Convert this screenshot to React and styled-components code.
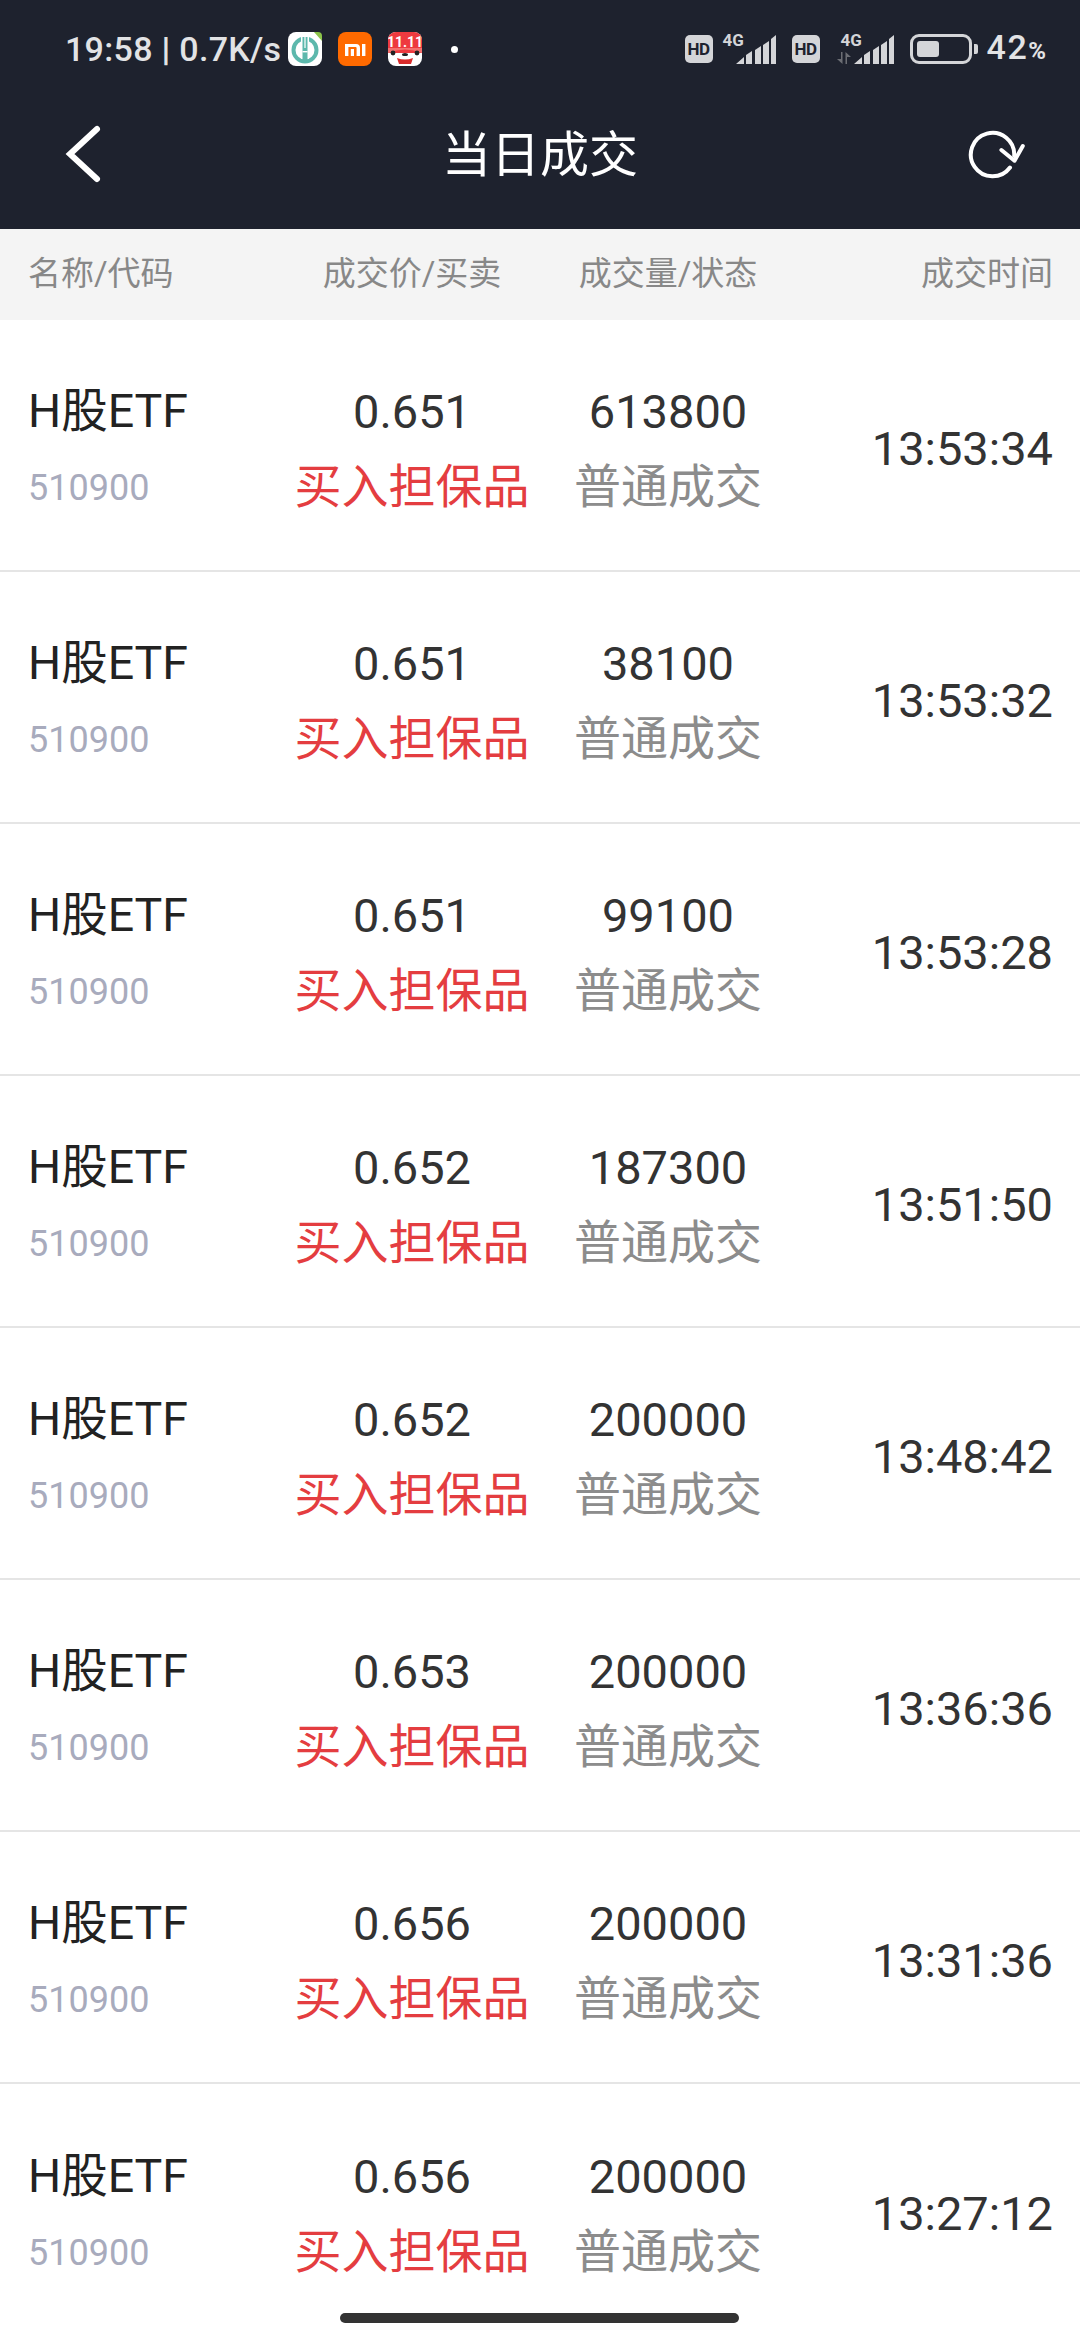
import React from 'react'
import styled, { createGlobalStyle } from 'styled-components'

const GlobalStyle = createGlobalStyle`
    html, body {
        margin: 0;
        padding: 0;
        background: #fff;
    }
    body {
        font-family: Roboto, "Noto Sans CJK SC", sans-serif;
    }
`

const trades = [
    { price: '0.651', volume: '613800', time: '13:53:34' },
    { price: '0.651', volume: '38100', time: '13:53:32' },
    { price: '0.651', volume: '99100', time: '13:53:28' },
    { price: '0.652', volume: '187300', time: '13:51:50' },
    { price: '0.652', volume: '200000', time: '13:48:42' },
    { price: '0.653', volume: '200000', time: '13:36:36' },
    { price: '0.656', volume: '200000', time: '13:31:36' },
    { price: '0.656', volume: '200000', time: '13:27:12' },
]

const BankIcon = () => (
    <svg width="34" height="34" viewBox="0 0 34 34">
        <rect width="34" height="34" rx="8" fill="#fff" />
        <path d="M26 0h4a4 4 0 0 1 4 4v5z" fill="#8bc34a" />
        <circle cx="17" cy="18" r="11.500" fill="none" stroke="#5cb8ac" strokeWidth="4" />
        <rect x="13" y="3" width="8" height="24" rx="1" fill="#fff" />
        <rect x="14.500" y="5" width="5" height="24" fill="#5cb8ac" />
        <rect x="16.400" y="5" width="1.200" height="11" fill="#fff" />
        <rect x="14.500" y="19" width="5" height="1.400" fill="#fff" />
    </svg>
)

const MiIcon = () => (
    <svg width="34" height="34" viewBox="0 0 34 34">
        <rect width="34" height="34" rx="8" fill="#ff6a00" />
        <path d="M7 12h11a4 4 0 0 1 4 4v8h-3.400v-8a1 1 0 0 0-1-1H10.400v9H7z" fill="#fff" />
        <rect x="12.800" y="17" width="3.200" height="7" fill="#fff" />
        <rect x="24" y="12" width="3.400" height="12" fill="#fff" />
    </svg>
)

const SaleIcon = () => (
    <svg width="34" height="34" viewBox="0 0 34 34">
        <defs>
            <clipPath id="saleClip">
                <rect width="34" height="34" rx="8" />
            </clipPath>
        </defs>
        <g clipPath="url(#saleClip)">
            <rect width="34" height="34" fill="#fff" />
            <rect width="34" height="21" fill="#ee3a3f" />
            <path d="M0 21q17-7 34 0v-5H0z" fill="#f4716f" />
            <text x="17" y="15" textAnchor="middle" fontSize="14" fontWeight="700" fontFamily="Roboto" fill="#fff">11.11</text>
            <ellipse cx="17" cy="25" rx="6" ry="3" fill="#fff" />
            <ellipse cx="17" cy="22.500" rx="3" ry="1.600" fill="#222" />
            <path d="M9 26q8 3 16 0l-2 6H11z" fill="#d92b2b" />
            <circle cx="5" cy="21" r="2.400" fill="#222" />
            <circle cx="29" cy="21" r="2.400" fill="#222" />
        </g>
    </svg>
)

const Signal = () => (
    <svg width="40" height="29" viewBox="0 0 40 29">
        <path d="M0 29l8-7v7zM10 29v-9l6-4v13zM19 29V15l6-4v18zM27 29V10l6-4v23zM35 29V4l5-4v29z" fill="#d4d5d8" />
    </svg>
)

const DataArrows = () => (
    <svg width="14" height="12" viewBox="0 0 14 12">
        <path d="M4 0h1.500v12L0 7h4zM8.500 0L14 5h-4v7H8.500z" fill="#6c6e74" />
    </svg>
)

const BackIcon = () => (
    <svg width="44" height="60" viewBox="0 0 44 60">
        <path d="M37 5L10 30l27 25" fill="none" stroke="#fff" strokeWidth="6" strokeLinecap="round" />
    </svg>
)

const RefreshIcon = () => (
    <svg width="60" height="56" viewBox="0 0 60 56">
        <path d="M42 41.500A21.700 21.700 0 1 1 46.200 30" fill="none" stroke="#fff" strokeWidth="4" strokeLinecap="round" />
        <path d="M33.400 24L46.500 34.700L54.800 20" fill="none" stroke="#fff" strokeWidth="4" strokeLinecap="round" strokeLinejoin="round" />
    </svg>
)

const App = () => {
    return (
        <Page>
            <GlobalStyle />
            <TopBar>
                <StatusBar>
                    <StatusLeft>
                        <Clock>19:58 <b>|</b> 0.7K/s</Clock>
                        <BankIcon />
                        <MiIcon />
                        <SaleIcon />
                        <NoticeDot />
                    </StatusLeft>
                    <StatusRight>
                        <HdBadge>HD</HdBadge>
                        <Cell>
                            <NetLabel>4G</NetLabel>
                            <Signal />
                        </Cell>
                        <HdBadge>HD</HdBadge>
                        <Cell wide>
                            <NetLabel wide>4G</NetLabel>
                            <DataArrowSlot><DataArrows /></DataArrowSlot>
                            <Signal />
                        </Cell>
                        <Battery>
                            <BatteryFill />
                        </Battery>
                        <BatteryNub />
                        <BatteryText>42<small>%</small></BatteryText>
                    </StatusRight>
                </StatusBar>
                <NavBar>
                    <BackIcon />
                    <Title>当日成交</Title>
                    <RefreshIcon />
                </NavBar>
            </TopBar>
            <TableHead>
                <HeadCell>名称/代码</HeadCell>
                <HeadCell center>成交价/买卖</HeadCell>
                <HeadCell center>成交量/状态</HeadCell>
                <HeadCell right>成交时间</HeadCell>
            </TableHead>
            <RowList>
                {trades.map((t, i) => (
                    <Row key={i}>
                        <Stack>
                            <Name>H股ETF</Name>
                            <Code>510900</Code>
                        </Stack>
                        <Stack center>
                            <Value>{t.price}</Value>
                            <Label buy>买入担保品</Label>
                        </Stack>
                        <Stack center>
                            <Value>{t.volume}</Value>
                            <Label>普通成交</Label>
                        </Stack>
                        <Time>{t.time}</Time>
                    </Row>
                ))}
            </RowList>
            <HomeIndicator />
        </Page>
    )
}

export default App

const Page = styled.div`
    position: relative;
    width: 1080px;
    height: 2340px;
    overflow: hidden;
    background: #fff;
`

const TopBar = styled.header`
    height: 229px;
    background: #1e222e;
`

const StatusBar = styled.div`
    height: 88px;
    box-sizing: border-box;
    padding: 32px 34px 0 65px;
    display: flex;
    justify-content: space-between;
    align-items: flex-start;
`

const StatusLeft = styled.div`
    display: flex;
    align-items: center;
    gap: 16px;
    height: 34px;
`

const Clock = styled.span`
    font-family: Roboto, sans-serif;
    font-size: 34px;
    font-weight: 500;
    letter-spacing: 0.3px;
    color: #e2e3e5;
    line-height: 34px;
    width: 207px;
    white-space: pre;

    b {
        font-weight: 900;
    }
`

const NoticeDot = styled.i`
    width: 7px;
    height: 7px;
    border-radius: 50%;
    background: #fff;
    margin-left: 13px;
`

const StatusRight = styled.div`
    display: flex;
    align-items: center;
    height: 34px;
`

const HdBadge = styled.span`
    width: 28px;
    height: 28px;
    border-radius: 5px;
    background: #d4d5d8;
    color: #1e222e;
    font-family: Roboto, sans-serif;
    font-size: 17px;
    font-weight: 700;
    line-height: 28px;
    text-align: center;
    letter-spacing: -0.5px;
`

const Cell = styled.div`
    position: relative;
    width: ${(p) => (p.wide ? '57px' : '53px')};
    height: 29px;
    margin-left: ${(p) => (p.wide ? '17px' : '10px')};
    margin-right: 16px;
    display: flex;
    justify-content: flex-end;
`

const NetLabel = styled.span`
    position: absolute;
    left: ${(p) => (p.wide ? '4px' : '0')};
    top: -2px;
    font-family: Roboto, sans-serif;
    font-size: 17px;
    font-weight: 700;
    line-height: 15px;
    color: #d4d5d8;
`

const DataArrowSlot = styled.span`
    position: absolute;
    left: 0;
    bottom: 0;
    line-height: 0;
`

const Battery = styled.div`
    width: 62px;
    height: 30px;
    box-sizing: border-box;
    border: 3px solid #d4d5d8;
    border-radius: 9px;
    padding: 4px;
`

const BatteryFill = styled.div`
    width: 22px;
    height: 16px;
    border-radius: 3px;
    background: #d4d5d8;
`

const BatteryNub = styled.i`
    width: 4px;
    height: 10px;
    margin-left: 2px;
    border-radius: 0 2px 2px 0;
    background: #d4d5d8;
`

const BatteryText = styled.span`
    margin-left: 9px;
    font-family: Roboto, sans-serif;
    font-size: 34px;
    font-weight: 500;
    letter-spacing: 1.5px;
    line-height: 32px;
    color: #e2e3e5;

    small {
        font-size: 24px;
        font-weight: 700;
        letter-spacing: 0;
    }
`

const NavBar = styled.div`
    height: 141px;
    box-sizing: border-box;
    padding: 0 52px 9px 60px;
    display: flex;
    justify-content: space-between;
    align-items: center;
`

const Title = styled.h1`
    margin: 0 0 6px 8px;
    font-family: "Noto Sans CJK SC", sans-serif;
    font-size: 49px;
    font-weight: 400;
    line-height: 60px;
    color: #fff;
`

const TableHead = styled.div`
    height: 91px;
    box-sizing: border-box;
    padding: 0 27px 2px 28px;
    display: grid;
    grid-template-columns: 249px 270px 242px 1fr;
    align-items: center;
    background: #f4f4f4;
`

const HeadCell = styled.div`
    font-family: Roboto, "Noto Sans CJK SC", sans-serif;
    font-size: 33px;
    line-height: 40px;
    color: #888;
    white-space: nowrap;
    text-align: ${(p) => (p.center ? 'center' : p.right ? 'right' : 'left')};
`

const RowList = styled.div`
    display: flex;
    flex-direction: column;
`

const Row = styled.div`
    height: 252px;
    box-sizing: border-box;
    padding: 8px 27px 0 28px;
    display: grid;
    grid-template-columns: 249px 270px 242px 1fr;
    align-items: center;
    border-bottom: 2px solid #e5e5e5;

    &:last-child {
        border-bottom: none;
    }
`

const Stack = styled.div`
    display: flex;
    flex-direction: column;
    align-items: ${(p) => (p.center ? 'center' : 'flex-start')};
    gap: ${(p) => (p.center ? '17px' : '19px')};
`

const Name = styled.div`
    font-size: 46.5px;
    line-height: 58px;
    color: #222;
    white-space: nowrap;
`

const Code = styled.div`
    font-size: 36px;
    line-height: 58px;
    color: #a8abbd;
`

const Value = styled.div`
    font-size: 47px;
    line-height: 58px;
    color: #333;
`

const Label = styled.div`
    font-size: 47px;
    line-height: 58px;
    white-space: nowrap;
    color: ${(p) => (p.buy ? '#e43d40' : '#8c8c8c')};
`

const Time = styled.div`
    font-size: 47px;
    line-height: 58px;
    color: #333;
    text-align: right;
    white-space: nowrap;
`

const HomeIndicator = styled.div`
    position: absolute;
    left: 340px;
    bottom: 17px;
    width: 399px;
    height: 10px;
    border-radius: 5px;
    background: #333;
`
